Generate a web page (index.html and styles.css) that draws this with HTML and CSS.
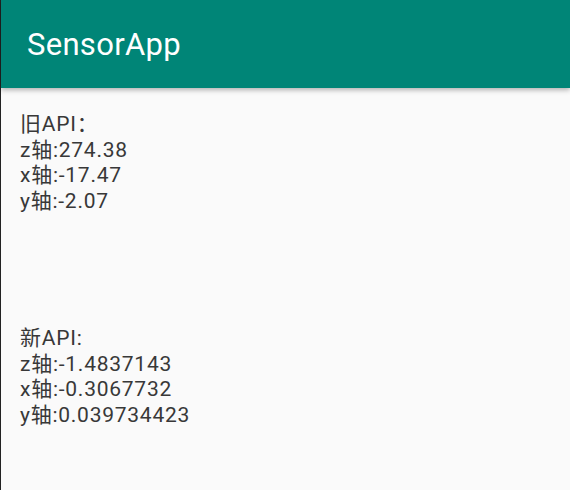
FILE: index.html
```html
<!DOCTYPE html>
<html lang="zh">
<head>
    <meta charset="UTF-8">
    <meta name="viewport" content="width=device-width, initial-scale=1.0">
    <title>SensorApp</title>
    <link rel="stylesheet" href="styles.css">
</head>
<body>
    <div class="screen">
        <div class="app-bar">
            <h1 class="app-title">SensorApp</h1>
        </div>

        <div class="content">
            <div class="sensor-block">
                <div>旧API：</div>
                <div>z轴:274.38</div>
                <div>x轴:-17.47</div>
                <div>y轴:-2.07</div>
            </div>

            <div class="sensor-block new-api">
                <div>新API:</div>
                <div>z轴:-1.4837143</div>
                <div>x轴:-0.3067732</div>
                <div>y轴:0.039734423</div>
            </div>
        </div>
    </div>
</body>
</html>
```

FILE: styles.css
```css
:root {
    --primary-color: #008577;
    --bg-color: #fafafa;
    --text-color: #383838;
}

html, body {
    margin: 0;
    height: 100%;
}

body {
    font-family: Roboto, "Noto Sans CJK SC", sans-serif;
    background-color: var(--bg-color);
}

.screen {
    min-height: 100%;
    border-left: 1px solid #222;
    box-sizing: border-box;
}

.app-bar {
    height: 88px;
    background-color: var(--primary-color);
    display: flex;
    align-items: center;
    padding-left: 26px;
    box-shadow: 0 2px 5px rgba(0,0,0,0.3);
    position: relative;
}

.app-title {
    margin: 0;
    color: #fff;
    font-size: 31px;
    font-weight: 400;
    letter-spacing: 0.3px;
    padding-top: 1px;
}

.content {
    padding: 24px 19px;
}

.sensor-block {
    color: var(--text-color);
    font-size: 21px;
    line-height: 25.5px;
    letter-spacing: 0.75px;
}

.new-api {
    margin-top: 112px;
}
```
